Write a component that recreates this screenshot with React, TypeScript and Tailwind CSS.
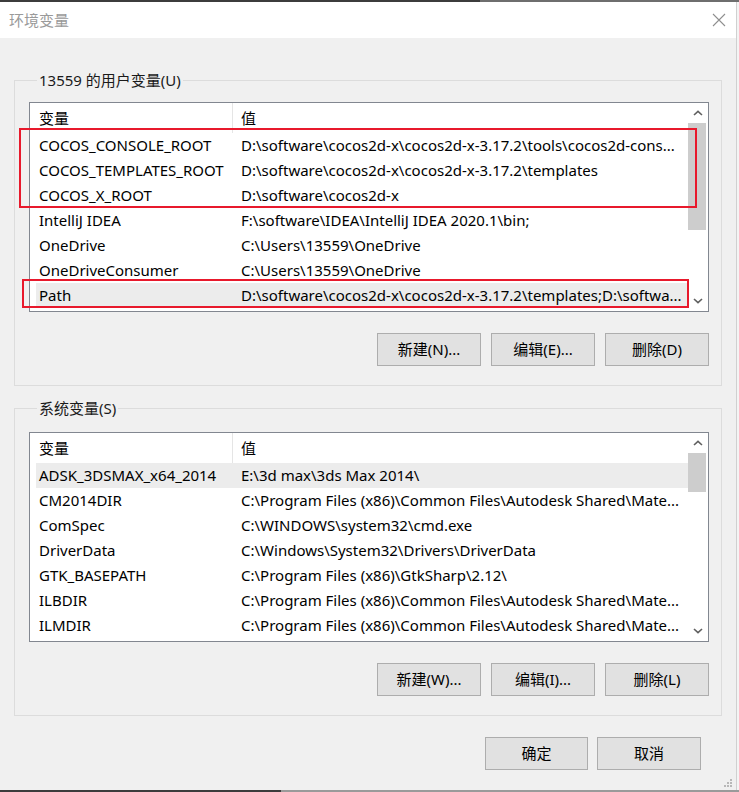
import React from "react";

type Variable = { name: string; value: string; selected?: boolean };

const userVars: Variable[] = [
  { name: "COCOS_CONSOLE_ROOT", value: "D:\\software\\cocos2d-x\\cocos2d-x-3.17.2\\tools\\cocos2d-cons..." },
  { name: "COCOS_TEMPLATES_ROOT", value: "D:\\software\\cocos2d-x\\cocos2d-x-3.17.2\\templates" },
  { name: "COCOS_X_ROOT", value: "D:\\software\\cocos2d-x" },
  { name: "IntelliJ IDEA", value: "F:\\software\\IDEA\\IntelliJ IDEA 2020.1\\bin;" },
  { name: "OneDrive", value: "C:\\Users\\13559\\OneDrive" },
  { name: "OneDriveConsumer", value: "C:\\Users\\13559\\OneDrive" },
  { name: "Path", value: "D:\\software\\cocos2d-x\\cocos2d-x-3.17.2\\templates;D:\\softwa...", selected: true },
];

const systemVars: Variable[] = [
  { name: "ADSK_3DSMAX_x64_2014", value: "E:\\3d max\\3ds Max 2014\\", selected: true },
  { name: "CM2014DIR", value: "C:\\Program Files (x86)\\Common Files\\Autodesk Shared\\Mate..." },
  { name: "ComSpec", value: "C:\\WINDOWS\\system32\\cmd.exe" },
  { name: "DriverData", value: "C:\\Windows\\System32\\Drivers\\DriverData" },
  { name: "GTK_BASEPATH", value: "C:\\Program Files (x86)\\GtkSharp\\2.12\\" },
  { name: "ILBDIR", value: "C:\\Program Files (x86)\\Common Files\\Autodesk Shared\\Mate..." },
  { name: "ILMDIR", value: "C:\\Program Files (x86)\\Common Files\\Autodesk Shared\\Mate..." },
];

const Chevron = ({ up }: { up?: boolean }) => (
  <svg width="10" height="6" viewBox="0 0 10 6">
    <polyline
      points={up ? "1,5 5,1.3 9,5" : "1,1 5,4.7 9,1"}
      fill="none"
      stroke="#606060"
      strokeWidth="1.6"
    />
  </svg>
);

const Scrollbar = ({ thumb }: { thumb: number }) => (
  <div className="w-[20px] flex flex-col bg-white">
    <div className="h-[20px] flex items-center justify-center">
      <Chevron up />
    </div>
    <div className="w-[18px] bg-[#cdcdcd]" style={{ height: thumb }} />
    <div className="flex-1" />
    <div className="h-[20px] flex items-center justify-center">
      <Chevron />
    </div>
  </div>
);

// 变量 / 值 list with header and fixed scrollbar
const VarList = ({ rows, thumb }: { rows: Variable[]; thumb: number }) => (
  <div className="h-[210px] border border-[#828790] bg-white flex">
    <div className="flex-1 overflow-hidden">
      <div className="flex h-[30px] items-center pl-[6px]">
        <div className="w-[196px] pl-[3px]">变量</div>
        <div className="h-full flex items-center border-l border-[#e5e5e5] pl-[8px]">值</div>
      </div>
      <div className="pl-[6px]">
        {rows.map((r) => (
          <div
            key={r.name}
            className={r.selected ? "flex h-[25px] items-center bg-[#ececec]" : "flex h-[25px] items-center"}
          >
            <div className="w-[196px] pl-[3px] whitespace-nowrap overflow-hidden">{r.name}</div>
            <div className="flex-1 pl-[9px] whitespace-nowrap overflow-hidden">{r.value}</div>
          </div>
        ))}
      </div>
    </div>
    <Scrollbar thumb={thumb} />
  </div>
);

const Button = ({ children, w = "w-[104px]" }: { children: React.ReactNode; w?: string }) => (
  <div className={`${w} h-[33px] flex items-center justify-center bg-[#e1e1e1] border border-[#adadad] text-black`}>
    {children}
  </div>
);

const Group = ({
  label,
  rows,
  thumb,
  buttons,
  listTop,
}: {
  label: string;
  rows: Variable[];
  thumb: number;
  buttons: string[];
  listTop: string;
}) => (
  <fieldset className="mx-[14px] border border-[#dcdcdc] pl-[14px] pr-[12px] pb-[19px]">
    <legend className="ml-[8px] px-[2px] leading-[20px] text-[#1a1a1a]">{label}</legend>
    <div className={listTop}>
      <VarList rows={rows} thumb={thumb} />
    </div>
    <div className="mt-[21px] flex justify-end gap-[10px]">
      {buttons.map((b) => (
        <Button key={b}>{b}</Button>
      ))}
    </div>
  </fieldset>
);

export default function App() {
  return (
    <div
      className="relative w-[739px] h-[792px] bg-white flex flex-col overflow-hidden text-[15px] text-black"
      style={{ fontFamily: '"Noto Sans", "Noto Sans CJK SC", sans-serif' }}
    >
      {/* top edge */}
      <div className="h-[2px] flex">
        <div className="w-[480px] bg-[#3c3c3c]" />
        <div className="flex-1 bg-[#6e6e6e]" />
      </div>

      <div className="flex-1 flex">
        <div className="w-[737px] flex flex-col border-r border-[#d0d0d0]">
          {/* title bar */}
          <div className="h-[36px] flex items-center justify-between pl-[9px] pr-[10px] bg-white">
            <span className="text-[#9a9a9a] leading-[20px]">环境变量</span>
            <svg width="14" height="14" viewBox="0 0 14 14">
              <path d="M1 1 L13 13 M13 1 L1 13" stroke="#8f8f8f" strokeWidth="1.1" />
            </svg>
          </div>

          {/* body */}
          <div className="relative flex-1 bg-[#f0f0f0] pt-[32px]">
            <Group
              label="13559 的用户变量(U)"
              rows={userVars}
              thumb={107}
              buttons={["新建(N)...", "编辑(E)...", "删除(D)"]}
              listTop="mt-[12px]"
            />
            <div className="mt-[12px]">
              <Group
                label="系统变量(S)"
                rows={systemVars}
                thumb={39}
                buttons={["新建(W)...", "编辑(I)...", "删除(L)"]}
                listTop="mt-[14px]"
              />
            </div>
            <div className="mt-[21px] flex justify-end gap-[9px] pr-[35px]">
              <Button w="w-[103px]">确定</Button>
              <Button w="w-[104px]">取消</Button>
            </div>

            {/* resize grip */}
            <svg className="absolute right-[3px] bottom-[2px]" width="10" height="10" viewBox="0 0 10 10">
              <rect x="7" y="1" width="2" height="2" fill="#b8b8b8" />
              <rect x="4" y="4" width="2" height="2" fill="#b8b8b8" />
              <rect x="7" y="4" width="2" height="2" fill="#b8b8b8" />
              <rect x="1" y="7" width="2" height="2" fill="#b8b8b8" />
              <rect x="4" y="7" width="2" height="2" fill="#b8b8b8" />
              <rect x="7" y="7" width="2" height="2" fill="#b8b8b8" />
            </svg>
          </div>
        </div>
        <div className="flex-1 bg-[#f4f4f4]" />
      </div>

      {/* bottom edge */}
      <div className="h-[2px] flex">
        <div className="w-[281px] bg-[#3c3c3c]" />
        <div className="flex-1 bg-[#9a9a9a]" />
      </div>

      {/* red annotation boxes */}
      <div className="absolute left-[19px] top-[128px] w-[678px] h-[80px] border-2 border-[#e8192c]" />
      <div className="absolute left-[22px] top-[279px] w-[667px] h-[29px] border-2 border-[#e8192c]" />
    </div>
  );
}
